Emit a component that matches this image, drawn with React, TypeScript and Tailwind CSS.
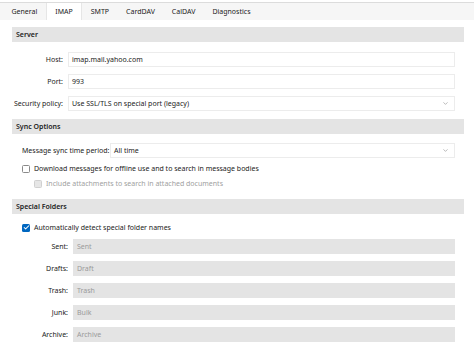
import { Check, ChevronDown } from 'lucide-react'

const tabs = ['General', 'IMAP', 'SMTP', 'CardDAV', 'CalDAV', 'Diagnostics']

const folders = [
  { label: 'Sent:', value: 'Sent' },
  { label: 'Drafts:', value: 'Draft' },
  { label: 'Trash:', value: 'Trash' },
  { label: 'Junk:', value: 'Bulk' },
  { label: 'Archive:', value: 'Archive' },
]

function Header({ title }: { title: string }) {
  return (
    <div className="ml-3 mr-[10px] h-[15px] bg-[#e4e4e4] flex items-center pl-1 font-semibold text-[#1b1b1b]">
      {title}
    </div>
  )
}

function Row({ label, labelW = 'w-[68px]', children }: { label: string; labelW?: string; children: React.ReactNode }) {
  return (
    <div className="flex items-center h-[22px]">
      <div className={`${labelW} shrink-0 text-right pr-[5px] text-[#1b1b1b] whitespace-nowrap`}>{label}</div>
      <div className="flex-1 mr-[19px]">{children}</div>
    </div>
  )
}

function TextBox({ value, disabled }: { value: string; disabled?: boolean }) {
  return (
    <div
      className={`h-[15px] flex items-center px-[3px] border ${
        disabled ? 'bg-[#e4e4e4] border-[#e4e4e4] text-[#9a9a9a]' : 'bg-white border-[#ececec] text-[#1b1b1b]'
      }`}
    >
      {value}
    </div>
  )
}

function Select({ value }: { value: string }) {
  return (
    <div className="h-[15px] flex items-center justify-between px-[3px] border border-[#ececec] bg-white text-[#1b1b1b]">
      <span>{value}</span>
      <ChevronDown className="w-[7px] h-[7px] text-[#8a8a8a] mr-[2px]" strokeWidth={2} />
    </div>
  )
}

function CheckBox({ checked, disabled, label }: { checked?: boolean; disabled?: boolean; label: string }) {
  return (
    <div className={`flex items-center gap-[4px] whitespace-nowrap ${disabled ? 'text-[#a0a0a0]' : 'text-[#1b1b1b]'}`}>
      <span
        className={`w-[8px] h-[8px] rounded-[1.5px] flex items-center justify-center ${
          checked
            ? 'bg-[#0067c0]'
            : disabled
            ? 'bg-[#e6e6e6] border border-[#d0d0d0]'
            : 'bg-white border border-[#8a8a8a]'
        }`}
      >
        {checked && <Check className="w-[7px] h-[7px] text-white" strokeWidth={3.5} />}
      </span>
      <span>{label}</span>
    </div>
  )
}

export default function App() {
  return (
    <div
      className="w-[474px] h-[356px] bg-white text-[7px] leading-none overflow-hidden"
      style={{ fontFamily: '"Segoe UI", "Noto Sans", sans-serif' }}
    >
      {/* Tabs */}
      <div className="mt-[2px] h-[18px] border-t border-[#dcdcdc] bg-[#f6f6f6] flex pl-[3px]">
        {tabs.map(t => (
          <div
            key={t}
            className={`h-full flex items-center px-[8.5px] text-[#1b1b1b] ${
              t === 'IMAP' ? 'bg-white border-x border-[#e6e6e6]' : ''
            }`}
          >
            {t}
          </div>
        ))}
      </div>

      <div className="mt-[7px]">
        <Header title="Server" />
        <div className="mt-[6px]">
          <Row label="Host:"><TextBox value="imap.mail.yahoo.com" /></Row>
          <Row label="Port:"><TextBox value="993" /></Row>
          <Row label="Security policy:"><Select value="Use SSL/TLS on special port (legacy)" /></Row>
        </div>

        <div className="mt-[5px]">
          <Header title="Sync Options" />
        </div>
        <div className="mt-[5px]">
          <div className="flex items-center h-[22px]">
            <div className="pl-[22px] w-[110px] shrink-0 text-[#1b1b1b] whitespace-nowrap">Message sync time period:</div>
            <div className="flex-1 mr-[19px]"><Select value="All time" /></div>
          </div>
          <div className="pl-[22px] h-[15px] flex items-center">
            <CheckBox label="Download messages for offline use and to search in message bodies" />
          </div>
          <div className="pl-[34px] h-[15px] flex items-center">
            <CheckBox disabled label="Include attachments to search in attached documents" />
          </div>
        </div>

        <div className="mt-[8px]">
          <Header title="Special Folders" />
        </div>
        <div className="pl-[22px] mt-[6px] h-[15px] flex items-center">
          <CheckBox checked label="Automatically detect special folder names" />
        </div>
        <div>
          {folders.map(f => (
            <Row key={f.label} label={f.label} labelW="w-[73px]">
              <TextBox value={f.value} disabled />
            </Row>
          ))}
        </div>
      </div>
    </div>
  )
}
